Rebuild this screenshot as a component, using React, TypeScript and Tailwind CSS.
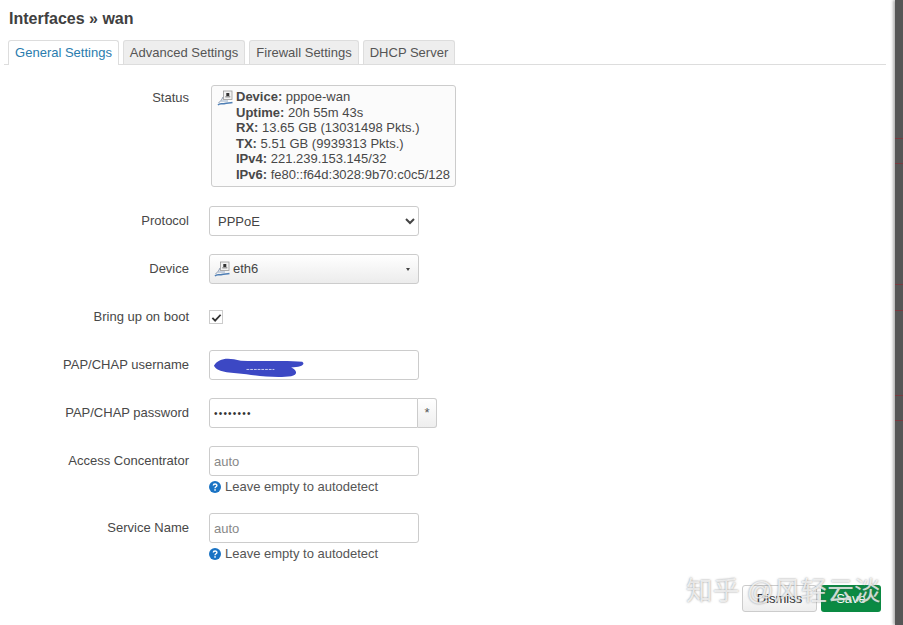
import React from "react";

function DevIcon({ className }: { className: string }) {
  return (
    <svg viewBox="0 0 16 16" className={className}>
      <rect x="6.500" y="1" width="8.500" height="8.500" fill="#f2f2f2" stroke="#9a9a9a" strokeWidth="0.8" />
      <rect x="9.300" y="3" width="3" height="3" fill="#333" />
      <rect x="8.300" y="6" width="5" height="1.500" fill="#999" />
      <path d="M6 7 L4.500 10 L1.500 13" stroke="#8c9ab0" strokeWidth="1" fill="none" />
      <path d="M1 15 C3 12.500 5 14.500 8 13.500 C10 13 13 13 15.500 12.500" stroke="#4f7fb5" strokeWidth="1.500" fill="none" />
      <path d="M4 11 L11 11" stroke="#a8bad0" strokeWidth="1.200" fill="none" />
    </svg>
  );
}

function Row({ label, children }: { label: string; children: React.ReactNode }) {
  return (
    <div className="flex items-start">
      <div className="w-[189px] shrink-0 text-right pt-[7px] leading-[16px] text-[#484848]">{label}</div>
      <div className="ml-[20px]">{children}</div>
    </div>
  );
}

function Help() {
  return (
    <div className="flex items-center h-[19px] pt-[2px] text-[#555] leading-[15px]">
      <svg viewBox="0 0 12 12" className="w-[12px] h-[12px] mr-[4px] shrink-0">
        <circle cx="6" cy="6" r="6" fill="#1a73c4" />
        <path d="M4.300 4.600 C4.300 2.500 7.900 2.500 7.900 4.500 C7.900 5.800 6 5.700 6 7.200" stroke="#fff" strokeWidth="1.400" fill="none" />
        <rect x="5.300" y="8.200" width="1.500" height="1.500" fill="#fff" />
      </svg>
      Leave empty to autodetect
    </div>
  );
}

const inputCls =
  "block w-[210px] h-[30px] rounded-[3px] border border-[#ccc] bg-white px-[4px] text-[13px] text-[#555] placeholder:text-[#888] outline-none";

export default function App() {
  return (
    <div
      className="relative flex w-[903px] h-[625px] overflow-hidden bg-white text-[13px] text-[#484848]"
      style={{ fontFamily: '"Liberation Sans", Arial, sans-serif' }}
    >
      <main className="w-[895px] shrink-0 pt-[10px]">
        <h2 className="ml-[9px] text-[16px] font-bold leading-[18px] text-[#404040]">Interfaces » wan</h2>

        <div className="mt-[12px] ml-[4px] mr-[9px] flex h-[25px] items-end gap-[4px] border-b border-[#ddd] pl-[4px] leading-[16px]">
          <div className="-mb-px flex h-[25px] w-[111px] items-center justify-center rounded-t-[3px] border border-b-0 border-[#ddd] bg-white text-[#2a7cae]">
            General Settings
          </div>
          <div className="flex h-[24px] w-[122px] items-center justify-center rounded-t-[3px] border border-b-0 border-[#ddd] bg-[#eee] text-[#555]">
            Advanced Settings
          </div>
          <div className="flex h-[24px] w-[110px] items-center justify-center rounded-t-[3px] border border-b-0 border-[#ddd] bg-[#eee] text-[#555]">
            Firewall Settings
          </div>
          <div className="flex h-[24px] w-[92px] items-center justify-center rounded-t-[3px] border border-b-0 border-[#ddd] bg-[#eee] text-[#555]">
            DHCP Server
          </div>
        </div>

        <div className="mt-[20px] flex flex-col gap-[18px]">
          <div className="flex items-start pb-px">
            <div className="w-[189px] shrink-0 text-right pt-[5px] leading-[16px]">Status</div>
            <div className="ml-[22px] flex h-[102px] w-[245px] rounded-[3px] border border-[#ccc] bg-[#fbfbfb] pl-[5px] pt-[3px] leading-[15.500px]">
              <DevIcon className="mt-[1px] h-[16px] w-[16px] shrink-0" />
              <div className="ml-[3px] whitespace-nowrap">
                <div><b>Device:</b> pppoe-wan</div>
                <div><b>Uptime:</b> 20h 55m 43s</div>
                <div><b>RX:</b> 13.65 GB (13031498 Pkts.)</div>
                <div><b>TX:</b> 5.51 GB (9939313 Pkts.)</div>
                <div><b>IPv4:</b> 221.239.153.145/32</div>
                <div><b>IPv6:</b> fe80::f64d:3028:9b70:c0c5/128</div>
              </div>
            </div>
          </div>

          <Row label="Protocol">
            <select className="block h-[30px] w-[210px] rounded-[3px] border border-[#ccc] bg-white pl-[4px] text-[13px] text-[#444] outline-none">
              <option>PPPoE</option>
            </select>
          </Row>

          <Row label="Device">
            <div className="flex h-[30px] w-[210px] items-center rounded-[3px] border border-[#ccc] bg-gradient-to-b from-white to-[#ececec] pl-[4px] pr-[8px]">
              <DevIcon className="h-[16px] w-[16px] shrink-0" />
              <span className="ml-[3px] text-[#444]">eth6</span>
              <span className="ml-auto h-0 w-0 border-x-[2.500px] border-t-[3px] border-x-transparent border-t-[#444]" />
            </div>
          </Row>

          <Row label="Bring up on boot">
            <div className="flex h-[30px] items-center">
              <div className="flex h-[14px] w-[14px] items-center justify-center border border-[#ccc] bg-white">
                <svg viewBox="0 0 12 12" className="h-[11px] w-[11px]">
                  <path d="M1.500 6.500 L4.500 9.500 L10.500 3" stroke="#333" strokeWidth="2" fill="none" />
                </svg>
              </div>
            </div>
          </Row>

          <Row label="PAP/CHAP username">
            <div className="relative">
              <input className={inputCls} defaultValue="" />
              <svg viewBox="0 0 100 24" className="absolute left-[4px] top-[7px] h-[23px] w-[93px]" preserveAspectRatio="none">
                <path
                  d="M1 9 C6 1 16 0 30 4 C50 5 80 3 96 5 C100 8 94 11 84 11 C90 13 92 19 84 20 C70 22 50 20 36 18 C22 16 5 17 1 9 Z"
                  fill="#3c48c4"
                />
                <path d="M36 13 L66 13" stroke="#cfd3f2" strokeWidth="1" strokeDasharray="3 1" />
              </svg>
            </div>
          </Row>

          <Row label="PAP/CHAP password">
            <div className="flex w-[228px]">
              <input
                type="password"
                defaultValue="abcdefgh"
                className="block h-[30px] w-[209px] rounded-l-[3px] border border-[#ccc] bg-white px-[4px] text-[10px] tracking-[1.2px] text-[#333] outline-none"
              />
              <div className="flex h-[30px] w-[19px] items-center justify-center rounded-r-[3px] border border-l-0 border-[#ccc] bg-gradient-to-b from-white to-[#eee] text-[#555]">
                *
              </div>
            </div>
          </Row>

          <Row label="Access Concentrator">
            <input className={inputCls} placeholder="auto" />
            <Help />
          </Row>

          <Row label="Service Name">
            <input className={inputCls} placeholder="auto" />
            <Help />
          </Row>
        </div>

        <div className="mt-[23px] mr-[14px] flex justify-end gap-[4px]">
          <div className="flex h-[27px] w-[75px] items-center justify-center rounded-[3px] border border-[#ccc] bg-gradient-to-b from-white to-[#eee] text-[#333]">
            Dismiss
          </div>
          <div className="flex h-[27px] w-[60px] items-center justify-center rounded-[3px] bg-[#0a8a43] text-white">
            Save
          </div>
        </div>
      </main>

      <aside className="relative w-[8px] shrink-0 bg-[#565656] shadow-[-2px_0_3px_rgba(0,0,0,0.3)]">
        <div className="absolute left-0 top-[138px] h-px w-full bg-[#7a3a40]" />
        <div className="absolute left-0 top-[163px] h-px w-full bg-[#7a3a40]" />
        <div className="absolute left-0 top-[284px] h-px w-full bg-[#7a3a40]" />
        <div className="absolute left-0 top-[310px] h-px w-full bg-[#7a3a40]" />
        <div className="absolute left-0 top-[395px] h-px w-full bg-[#7a3a40]" />
        <div className="absolute left-0 top-[420px] h-px w-full bg-[#7a3a40]" />
      </aside>

      <div
        className="pointer-events-none absolute left-[686px] top-[574px] whitespace-nowrap text-[26.700px] leading-[34px] text-white/75 [text-shadow:0_0_2px_rgba(90,90,90,0.7)]"
        style={{ fontFamily: '"Liberation Sans", "Noto Sans CJK SC", sans-serif' }}
      >
        知乎 @风轻云淡
      </div>
    </div>
  );
}
